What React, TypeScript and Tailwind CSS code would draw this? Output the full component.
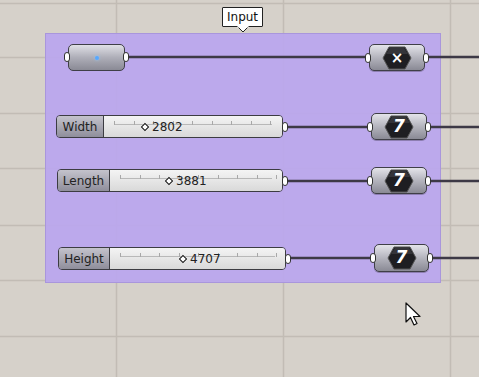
import React from "react";

const FONT = { fontFamily: '"DejaVu Sans", "Liberation Sans", sans-serif' };

// Grasshopper-ish canvas: everything here lives on a free canvas, so nodes are placed absolutely.

function Port({ x, y }: { x: number; y: number }) {
  return (
    <div
      className="absolute w-[6px] h-[10px] rounded-full bg-white border border-[#333]"
      style={{ left: x - 3, top: y - 5 }}
    />
  );
}

function Hex({ children }: { children: React.ReactNode }) {
  return (
    <div className="relative w-[30px] h-[24px] flex items-center justify-center">
      <svg width="30" height="24" viewBox="0 0 30 24" className="absolute inset-0">
        <polygon points="7,1 23,1 29,12 23,23 7,23 1,12" fill="#1e1e22" stroke="#555" strokeWidth="1" />
        <polygon points="8,2 22,2 26,8 4,8" fill="#4a4a50" opacity="0.5" />
      </svg>
      <span className="relative">{children}</span>
    </div>
  );
}

function NumberNode({ x, y, w, h, children }: { x: number; y: number; w: number; h: number; children: React.ReactNode }) {
  return (
    <>
      <div
        className="absolute flex items-center justify-center rounded-[5px] border border-[#3f3f47] bg-gradient-to-b from-[#e4e4ea] via-[#b4b4bd] to-[#8a8a95] shadow-[0_1px_0_rgba(0,0,0,0.25)]"
        style={{ left: x, top: y, width: w, height: h }}
      >
        <Hex>{children}</Hex>
      </div>
      <Port x={x - 1} y={y + h / 2} />
      <Port x={x + w + 1} y={y + h / 2} />
    </>
  );
}

function Slider({ x, y, w, labelW, label, value, knob }: { x: number; y: number; w: number; labelW: number; label: string; value: string; knob: number }) {
  const ticks = Array.from({ length: 9 }, (_, i) => i);
  return (
    <>
      <div
        className="absolute flex rounded-[4px] border border-[#3c3c42] overflow-hidden text-[12px] text-[#222]"
        style={{ left: x, top: y, width: w, height: 23, ...FONT }}
      >
        <div
          className="flex items-center justify-center border-r border-[#3c3c42] bg-gradient-to-b from-[#c4c3cc] to-[#8f8e9b]"
          style={{ width: labelW }}
        >
          {label}
        </div>
        <div className="relative flex-1 bg-gradient-to-b from-[#f4f4f4] to-[#d9d9d9]">
          <div className="absolute left-[10px] right-[10px] top-[8px] h-[1px] bg-[#b8b8b8]" />
          {ticks.map((i) => (
            <div
              key={i}
              className="absolute top-[5px] w-[1px] h-[4px] bg-[#a8a8a8]"
              style={{ left: 10 + i * 19.5 }}
            />
          ))}
          <div className="absolute top-[5px] flex items-center gap-[4px] leading-none" style={{ left: knob }}>
            <div className="w-[6px] h-[6px] rotate-45 border-[1.5px] border-[#111] bg-white" />
            <span>{value}</span>
          </div>
        </div>
      </div>
      <Port x={x + w + 2} y={y + 11.5} />
    </>
  );
}

export default function App() {
  return (
    <div className="relative w-[479px] h-[377px] overflow-hidden bg-[#d6d1ca]" style={FONT}>
      {/* grid */}
      <svg width="479" height="377" className="absolute inset-0">
        {[3, 57, 113, 168, 225, 280, 336].map((y) => (
          <line key={y} x1="0" x2="479" y1={y + 0.5} y2={y + 0.5} stroke="#c2bcb5" strokeWidth="1.5" />
        ))}
        {[116, 283, 450].map((x) => (
          <line key={x} y1="0" y2="377" x1={x + 0.5} x2={x + 0.5} stroke="#c2bcb5" strokeWidth="1.5" />
        ))}
      </svg>

      {/* group */}
      <div className="absolute left-[45px] top-[33px] w-[396px] h-[250px] bg-[#bba7ed]/95 border border-[#a996dc]" />

      {/* wires */}
      <svg width="479" height="377" className="absolute inset-0">
        <g stroke="#3d3946" strokeWidth="2.5" fill="none">
          <line x1="128" y1="57" x2="367" y2="57" />
          <line x1="429" y1="57" x2="479" y2="57" />
          <line x1="286" y1="127" x2="369" y2="127" />
          <line x1="429" y1="127" x2="479" y2="127" />
          <line x1="286" y1="181" x2="369" y2="181" />
          <line x1="429" y1="181" x2="479" y2="181" />
          <line x1="289" y1="258" x2="372" y2="258" />
          <line x1="432" y1="258" x2="479" y2="258" />
        </g>
      </svg>

      {/* tooltip */}
      <div className="absolute left-[222px] top-[7px] h-[20px] px-[4px] flex items-center bg-white border border-[#222] text-[12px] text-[#111] rounded-[1px]">
        Input
      </div>
      <svg width="12" height="8" className="absolute left-[237px] top-[26px]">
        <polygon points="0,0 12,0 6,6" fill="white" stroke="#222" strokeWidth="1" />
        <line x1="0.5" y1="0.5" x2="11.5" y2="0.5" stroke="white" strokeWidth="2" />
      </svg>

      {/* input param */}
      <div className="absolute left-[68px] top-[44px] w-[57px] h-[27px] rounded-[5px] border border-[#3f3f47] bg-gradient-to-b from-[#e0e0e6] via-[#aeaeb8] to-[#8a8a95] flex items-center justify-center">
        <div className="w-[4px] h-[4px] rounded-full bg-[#58a8ff] shadow-[0_0_3px_#8cc8ff]" />
      </div>
      <Port x={67} y={57} />
      <Port x={126} y={57} />

      {/* panel node */}
      <NumberNode x={369} y={44} w={56} h={27}>
        <span className="text-white font-bold text-[15px] leading-none">×</span>
      </NumberNode>

      <Slider x={56} y={115} w={227} labelW={47} label="Width" value="2802" knob={38} />
      <NumberNode x={371} y={113} w={56} h={27}>
        <span className="text-white font-bold text-[17px] leading-none italic">7</span>
      </NumberNode>

      <Slider x={57} y={169} w={226} labelW={52} label="Length" value="3881" knob={56} />
      <NumberNode x={371} y={167} w={56} h={27}>
        <span className="text-white font-bold text-[17px] leading-none italic">7</span>
      </NumberNode>

      <Slider x={58} y={247} w={228} labelW={51} label="Height" value="4707" knob={70} />
      <NumberNode x={374} y={244} w={55} h={28}>
        <span className="text-white font-bold text-[17px] leading-none italic">7</span>
      </NumberNode>

      {/* cursor */}
      <svg width="18" height="26" viewBox="0 0 18 26" className="absolute left-[405px] top-[302px]">
        <path d="M1,1 L1,20 L5.5,15.5 L9,23 L12,21.5 L8.5,14.5 L15,14.5 Z" fill="white" stroke="#111" strokeWidth="1.2" strokeLinejoin="round" />
      </svg>
    </div>
  );
}
